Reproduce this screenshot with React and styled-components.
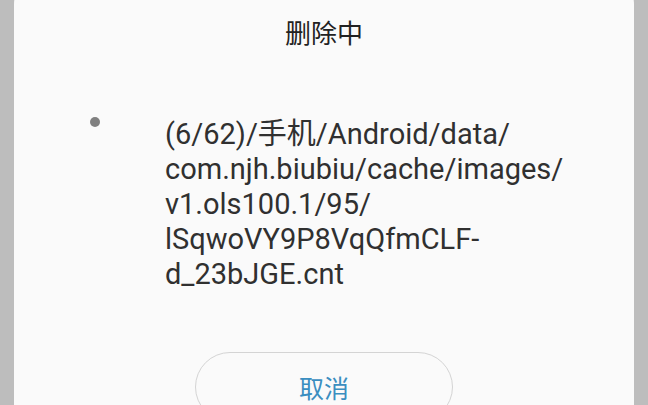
import React from "react";
import styled, { createGlobalStyle } from "styled-components";

const Global = createGlobalStyle`
  html, body { margin: 0; padding: 0; }
  body {
    background: #bdbdbd;
    width: 648px;
    height: 405px;
    overflow: hidden;
    font-family: Roboto, "Noto Sans CJK SC", sans-serif;
  }
`;

const Screen = styled.div`
  height: 405px;
  padding: 0 14px;
  overflow: hidden;
  box-sizing: border-box;
`;

const Dialog = styled.div`
  margin-top: -20px;
  height: 470px;
  background: #fafafa;
  border-radius: 24px;
  display: flex;
  flex-direction: column;
`;

const Title = styled.div`
  padding-top: 37px;
  font-family: "Noto Sans CJK SC", sans-serif;
  font-size: 26px;
  line-height: 30px;
  text-align: center;
  color: #222;
`;

const Body = styled.div`
  margin-top: 70px;
  display: flex;
  align-items: flex-start;
  padding-left: 76px;
  gap: 65px;
`;

const Dot = styled.span`
  flex: none;
  width: 10px;
  height: 10px;
  border-radius: 50%;
  background: #808080;
`;

const Path = styled.div`
  font-family: Roboto, "Noto Sans CJK SC", sans-serif;
  font-size: 29px;
  line-height: 35px;
  color: #303030;
`;

const Line = styled.div`
  white-space: nowrap;
`;

const Actions = styled.div`
  margin-top: 60px;
  display: flex;
  justify-content: center;
`;

const CancelButton = styled.button`
  width: 258px;
  height: 70px;
  border-radius: 35px;
  border: 1.5px solid #d4d4d4;
  background: transparent;
  font-family: "Noto Sans CJK SC", sans-serif;
  font-size: 25px;
  color: #3a8ec0;
  padding: 0;
`;

const lines = [
  "(6/62)/手机/Android/data/",
  "com.njh.biubiu/cache/images/",
  "v1.ols100.1/95/",
  "lSqwoVY9P8VqQfmCLF-",
  "d_23bJGE.cnt",
];

export default function App() {
  return (
    <>
      <Global />
      <Screen>
        <Dialog>
          <Title>删除中</Title>
          <Body>
            <Dot />
            <Path>
              {lines.map((l) => (
                <Line key={l}>{l}</Line>
              ))}
            </Path>
          </Body>
          <Actions>
            <CancelButton>取消</CancelButton>
          </Actions>
        </Dialog>
      </Screen>
    </>
  );
}
